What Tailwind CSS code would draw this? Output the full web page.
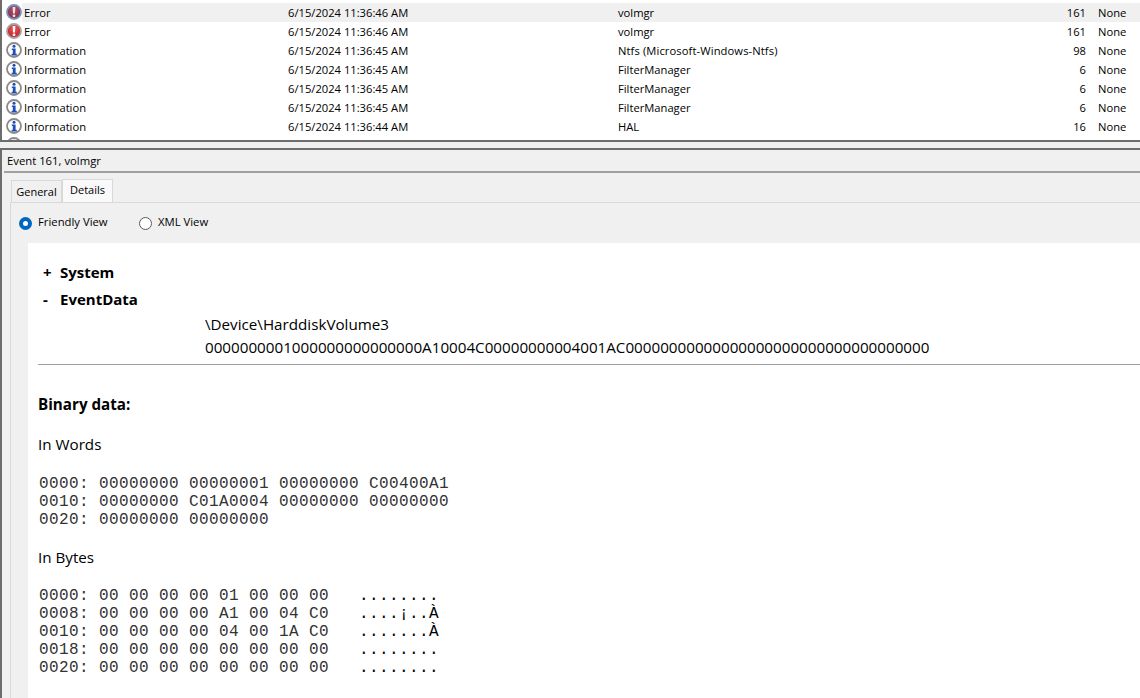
<!DOCTYPE html>
<html lang="en">
<head>
    <meta charset="UTF-8">
    <title>Event Viewer</title>
    <script src="https://cdn.jsdelivr.net/npm/@tailwindcss/browser@4"></script>
</head>
<body class="w-[1140px] h-[698px] overflow-hidden bg-[#f0f0f0] font-['Open_Sans',sans-serif] text-[#000]">
<svg width="0" height="0" class="absolute">
    <defs>
        <radialGradient id="redFill" cx="50%" cy="35%" r="65%">
            <stop offset="0%" stop-color="#f05a5a"/>
            <stop offset="100%" stop-color="#c01a22"/>
        </radialGradient>
        <radialGradient id="dimFill" cx="50%" cy="35%" r="65%">
            <stop offset="0%" stop-color="#b4536b"/>
            <stop offset="100%" stop-color="#7f2a45"/>
        </radialGradient>
        <symbol id="info" viewBox="0 0 16 16">
            <circle cx="8" cy="8" r="7" fill="#fff" stroke="#8a8a8a" stroke-width="1.8"/>
            <circle cx="8" cy="4.3" r="1.5" fill="#1f4fb5"/>
            <path d="M5.8 6.4H9.6v5.4h1.2v1.6H5.6v-1.6h1.2V8H5.8z" fill="#1f4fb5"/>
        </symbol>
        <symbol id="err" viewBox="0 0 16 16">
            <circle cx="8" cy="8" r="7" fill="url(#redFill)" stroke="#a3a3a3" stroke-width="1.8"/>
            <path d="M6.6 3h2.8l-.5 6.4H7.1z" fill="#fff"/>
            <circle cx="8" cy="11.8" r="1.4" fill="#fff"/>
        </symbol>
        <symbol id="errDim" viewBox="0 0 16 16">
            <circle cx="8" cy="8" r="7" fill="url(#dimFill)" stroke="#7393ba" stroke-width="1.8"/>
            <path d="M6.6 3h2.8l-.5 6.4H7.1z" fill="#f0dfe4"/>
            <circle cx="8" cy="11.8" r="1.4" fill="#f0dfe4"/>
        </symbol>
    </defs>
</svg>

<!-- Event list -->
<div class="h-[142px] bg-white border-l-2 border-b-2 border-[#6d6d6d] pt-[3px] overflow-hidden text-[11.2px] leading-[19px]">
    <div class="flex h-[19px] pl-[4px]">
        <svg class="w-4 h-4 mt-[1px] shrink-0"><use href="#errDim"/></svg>
        <div class="flex flex-1 bg-[#f0f0f0] pl-[2px]">
            <span class="w-[264px]">Error</span><span class="w-[330px]">6/15/2024 11:36:46 AM</span><span class="w-[420px]">volmgr</span><span class="w-[48px] text-right">161</span><span class="ml-[12px]">None</span>
        </div>
    </div>
    <div class="flex h-[19px] pl-[4px]">
        <svg class="w-4 h-4 mt-[1px] shrink-0"><use href="#err"/></svg>
        <div class="flex flex-1 pl-[2px]">
            <span class="w-[264px]">Error</span><span class="w-[330px]">6/15/2024 11:36:46 AM</span><span class="w-[420px]">volmgr</span><span class="w-[48px] text-right">161</span><span class="ml-[12px]">None</span>
        </div>
    </div>
    <div class="flex h-[19px] pl-[4px]">
        <svg class="w-4 h-4 mt-[1px] shrink-0"><use href="#info"/></svg>
        <div class="flex flex-1 pl-[2px]">
            <span class="w-[264px]">Information</span><span class="w-[330px]">6/15/2024 11:36:45 AM</span><span class="w-[420px] tracking-[0.1px]">Ntfs (Microsoft-Windows-Ntfs)</span><span class="w-[48px] text-right">98</span><span class="ml-[12px]">None</span>
        </div>
    </div>
    <div class="flex h-[19px] pl-[4px]">
        <svg class="w-4 h-4 mt-[1px] shrink-0"><use href="#info"/></svg>
        <div class="flex flex-1 pl-[2px]">
            <span class="w-[264px]">Information</span><span class="w-[330px]">6/15/2024 11:36:45 AM</span><span class="w-[420px]">FilterManager</span><span class="w-[48px] text-right">6</span><span class="ml-[12px]">None</span>
        </div>
    </div>
    <div class="flex h-[19px] pl-[4px]">
        <svg class="w-4 h-4 mt-[1px] shrink-0"><use href="#info"/></svg>
        <div class="flex flex-1 pl-[2px]">
            <span class="w-[264px]">Information</span><span class="w-[330px]">6/15/2024 11:36:45 AM</span><span class="w-[420px]">FilterManager</span><span class="w-[48px] text-right">6</span><span class="ml-[12px]">None</span>
        </div>
    </div>
    <div class="flex h-[19px] pl-[4px]">
        <svg class="w-4 h-4 mt-[1px] shrink-0"><use href="#info"/></svg>
        <div class="flex flex-1 pl-[2px]">
            <span class="w-[264px]">Information</span><span class="w-[330px]">6/15/2024 11:36:45 AM</span><span class="w-[420px]">FilterManager</span><span class="w-[48px] text-right">6</span><span class="ml-[12px]">None</span>
        </div>
    </div>
    <div class="flex h-[19px] pl-[4px]">
        <svg class="w-4 h-4 mt-[1px] shrink-0"><use href="#info"/></svg>
        <div class="flex flex-1 pl-[2px]">
            <span class="w-[264px]">Information</span><span class="w-[330px]">6/15/2024 11:36:44 AM</span><span class="w-[420px]">HAL</span><span class="w-[48px] text-right">16</span><span class="ml-[12px]">None</span>
        </div>
    </div>
    <div class="flex h-[19px] pl-[4px]">
        <svg class="w-4 h-4 mt-[1px] shrink-0"><use href="#info"/></svg>
    </div>
</div>

<!-- Details pane -->
<div class="mt-[6px] border-t-2 border-l-2 border-[#6d6d6d] h-[550px] pl-[2px]">
    <div class="h-[21px] pl-[3px] text-[11.3px] leading-[21px] border-b-2 border-[#a0a0a0] box-content">Event 161, volmgr</div>

    <div class="flex h-[29px] pl-[7px] pt-[7px] text-[11px]">
        <div class="w-[51px] h-[22px] border border-b-0 border-[#d9d9d9] bg-[#f0f0f0] text-center leading-[22px]">General</div>
        <div class="w-[51px] h-[23px] mt-[-1px] border border-b-0 border-[#d9d9d9] bg-[#f9f9f9] text-center leading-[20px]">Details</div>
    </div>

    <div class="ml-[6px] border-l border-t border-[#d9d9d9] pl-[7px] h-[498px]">
        <div class="flex items-center h-[40px] text-[11.3px] pl-[1px]">
            <span class="w-[13px] h-[13px] rounded-full border-[4px] border-[#0067c0] bg-white"></span>
            <span class="ml-[6px] w-[101px] mt-[-2px]">Friendly View</span>
            <span class="w-[13px] h-[13px] rounded-full border border-[#5a5a5a] bg-white"></span>
            <span class="ml-[6px] mt-[-2px]">XML View</span>
        </div>

        <div class="bg-white h-[460px] ml-[10px] pl-[10px] text-[15.2px]">
            <div class="h-[22px]"></div>
            <div class="flex h-[14px] items-center font-bold text-[15px] pl-[5px]"><span class="w-[17px]">+</span>System</div>
            <div class="flex h-[14px] mt-[13px] items-center font-bold text-[15px] pl-[5px]"><span class="w-[17px]">-</span>EventData</div>
            <div class="pl-[167px] mt-[7px] leading-[23px]">
                <div>\Device\HarddiskVolume3</div>
                <div>0000000001000000000000000A10004C00000000004001AC00000000000000000000000000000000000</div>
            </div>
            <div class="border-t border-[#a0a0a0] mt-[5px]"></div>
            <div class="font-bold mt-[29px] leading-[20px]">Binary data:</div>
            <div class="mt-[20px] leading-[20px]">In Words</div>
            <div class="mt-[21px] pl-[1px] font-['Liberation_Mono',monospace] text-[16px] tracking-[0.4px] leading-[18px] text-[#333]">
                <div class="whitespace-pre">0000: 00000000 00000001 00000000 C00400A1</div>
                <div class="whitespace-pre">0010: 00000000 C01A0004 00000000 00000000</div>
                <div class="whitespace-pre">0020: 00000000 00000000</div>
            </div>
            <div class="mt-[18px] leading-[20px]">In Bytes</div>
            <div class="mt-[20px] pl-[1px] font-['Liberation_Mono',monospace] text-[16px] tracking-[0.4px] leading-[18px] text-[#333]">
                <div class="whitespace-pre">0000: 00 00 00 00 01 00 00 00   <span class="text-black">........</span></div>
                <div class="whitespace-pre">0008: 00 00 00 00 A1 00 04 C0   <span class="text-black">....¡..À</span></div>
                <div class="whitespace-pre">0010: 00 00 00 00 04 00 1A C0   <span class="text-black">.......À</span></div>
                <div class="whitespace-pre">0018: 00 00 00 00 00 00 00 00   <span class="text-black">........</span></div>
                <div class="whitespace-pre">0020: 00 00 00 00 00 00 00 00   <span class="text-black">........</span></div>
            </div>
        </div>
    </div>
</div>
</body>
</html>
